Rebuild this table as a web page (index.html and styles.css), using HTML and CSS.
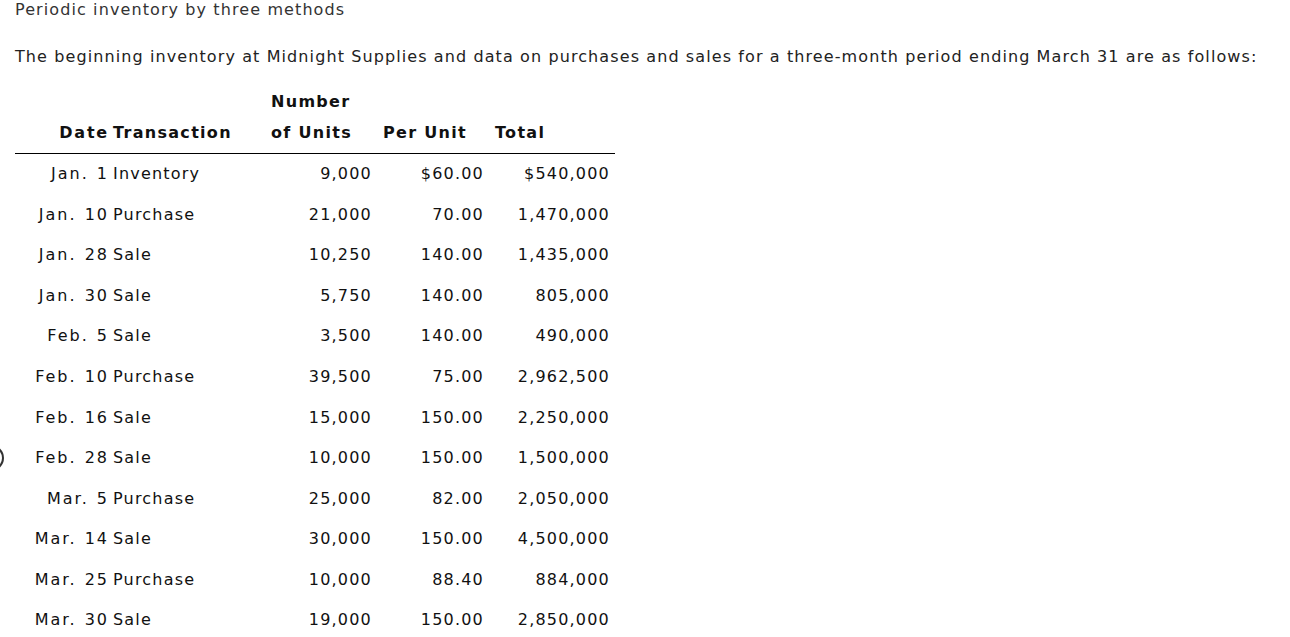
FILE: index.html
```html
<!DOCTYPE html>
<html lang="en">
<head>
<meta charset="utf-8">
<title>Periodic inventory by three methods</title>
<link rel="stylesheet" href="styles.css">
</head>
<body>
<span class="edge-mark" aria-hidden="true"></span>
<div class="title">Periodic inventory by three methods</div>
<p class="intro">The beginning inventory at Midnight Supplies and data on purchases and sales for a three-month period ending March 31 are as follows:</p>
<table class="inv">
  <colgroup>
    <col class="c-date"><col class="c-trans"><col class="c-units"><col class="c-unit"><col class="c-total">
  </colgroup>
  <thead>
    <tr class="h1"><th></th><th></th><th class="l">Number</th><th></th><th></th></tr>
    <tr class="h2"><th class="date">Date</th><th class="l trans">Transaction</th><th class="l">of Units</th><th class="l">Per Unit</th><th class="l">Total</th></tr>
  </thead>
  <tbody>
    <tr><td class="date">Jan. 1</td><td class="trans">Inventory</td><td class="num">9,000</td><td class="num">$60.00</td><td class="num">$540,000</td></tr>
    <tr><td class="date">Jan. 10</td><td class="trans">Purchase</td><td class="num">21,000</td><td class="num">70.00</td><td class="num">1,470,000</td></tr>
    <tr><td class="date">Jan. 28</td><td class="trans">Sale</td><td class="num">10,250</td><td class="num">140.00</td><td class="num">1,435,000</td></tr>
    <tr><td class="date">Jan. 30</td><td class="trans">Sale</td><td class="num">5,750</td><td class="num">140.00</td><td class="num">805,000</td></tr>
    <tr><td class="date">Feb. 5</td><td class="trans">Sale</td><td class="num">3,500</td><td class="num">140.00</td><td class="num">490,000</td></tr>
    <tr><td class="date">Feb. 10</td><td class="trans">Purchase</td><td class="num">39,500</td><td class="num">75.00</td><td class="num">2,962,500</td></tr>
    <tr><td class="date">Feb. 16</td><td class="trans">Sale</td><td class="num">15,000</td><td class="num">150.00</td><td class="num">2,250,000</td></tr>
    <tr><td class="date">Feb. 28</td><td class="trans">Sale</td><td class="num">10,000</td><td class="num">150.00</td><td class="num">1,500,000</td></tr>
    <tr><td class="date">Mar. 5</td><td class="trans">Purchase</td><td class="num">25,000</td><td class="num">82.00</td><td class="num">2,050,000</td></tr>
    <tr><td class="date">Mar. 14</td><td class="trans">Sale</td><td class="num">30,000</td><td class="num">150.00</td><td class="num">4,500,000</td></tr>
    <tr><td class="date">Mar. 25</td><td class="trans">Purchase</td><td class="num">10,000</td><td class="num">88.40</td><td class="num">884,000</td></tr>
    <tr><td class="date">Mar. 30</td><td class="trans">Sale</td><td class="num">19,000</td><td class="num">150.00</td><td class="num">2,850,000</td></tr>
  </tbody>
</table>
</body>
</html>
```
FILE: styles.css
```css
html, body {
  margin: 0;
  padding: 0;
  background: #fff;
}
body {
  font-family: "DejaVu Sans", Verdana, sans-serif;
  font-size: 16px;
  letter-spacing: 1.1px;
  color: #222;
  padding: 1px 0 0 15px;
  overflow: hidden;
}
.edge-mark {
  position: absolute;
  left: -22px;
  top: 445px;
  width: 22px;
  height: 22px;
  border: 2px solid #333;
  border-radius: 50%;
}
.title {
  line-height: 18px;
  color: #333;
}
.intro {
  margin: 29px 0 0;
  line-height: 18px;
  color: #222;
}
.inv {
  margin-top: 24px;
  border-collapse: collapse;
  table-layout: fixed;
  width: 600px;
  color: #111;
  letter-spacing: 1.2px;
}
.c-date { width: 95px; }
.c-trans { width: 155px; }
.c-units { width: 112px; }
.c-unit { width: 112px; }
.c-total { width: 126px; }
.inv th, .inv td {
  padding: 0;
  white-space: nowrap;
  vertical-align: middle;
  line-height: 18px;
}
.inv th {
  font-weight: bold;
  letter-spacing: 1.3px;
}
.inv .h1 th { height: 23px; }
.inv .h2 th {
  height: 40px;
  border-bottom: 1px solid #000;
}
.inv th.l { text-align: left; padding-left: 6px; }
.inv th.date, .inv td.date { text-align: right; padding-right: 1px; }
.inv th.date { letter-spacing: 1.8px; }
.inv td.date { letter-spacing: 2px; word-spacing: 1px; }
.inv th.trans, .inv td.trans { text-align: left; padding-left: 3px; }
.inv tbody td { height: 40.55px; }
.inv td.num { text-align: right; padding-right: 5px; }
```
